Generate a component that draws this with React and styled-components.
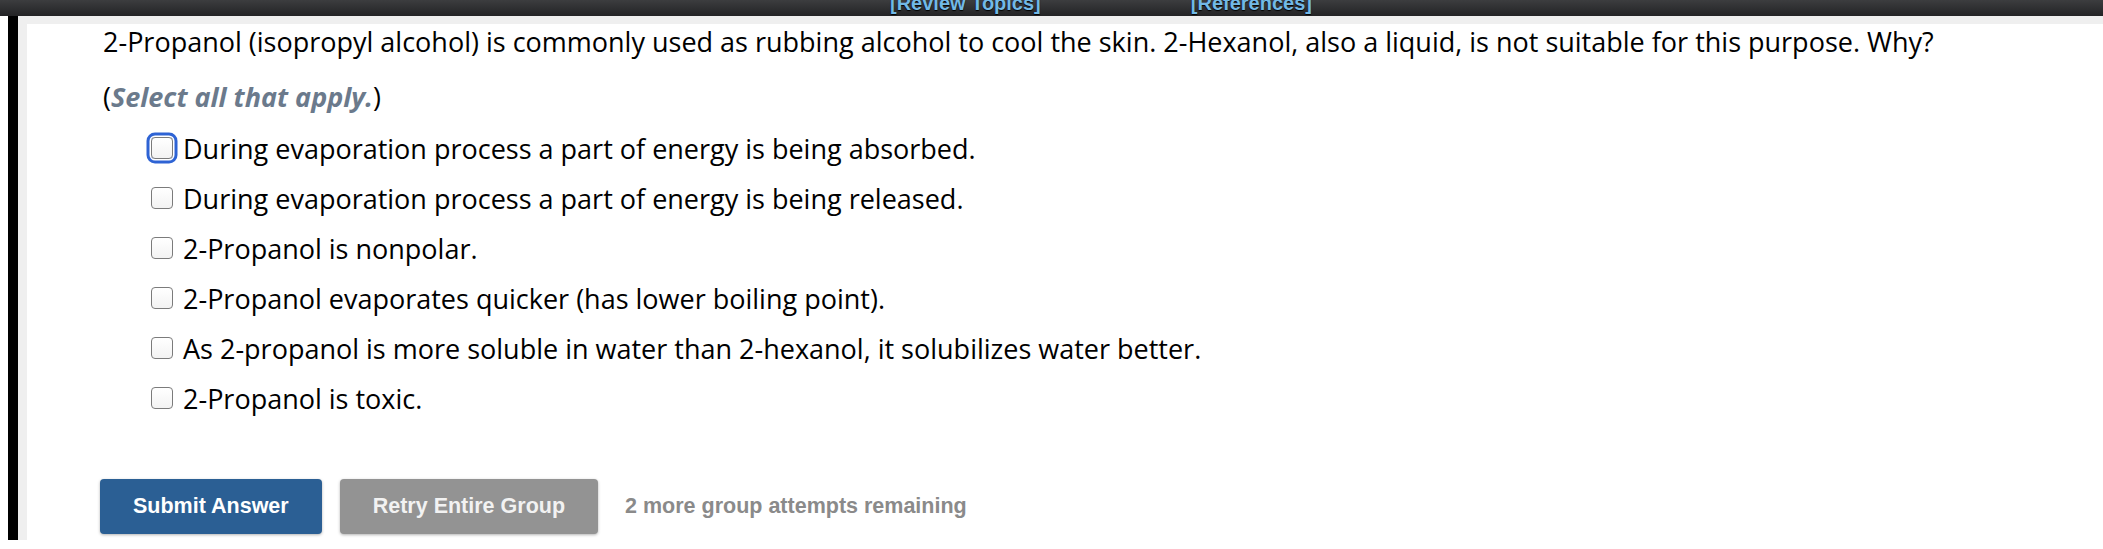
import React from 'react';
import styled, {createGlobalStyle} from 'styled-components';

const GlobalStyle = createGlobalStyle`
    html, body {
        margin: 0;
        padding: 0;
        background: #fff;
    }
    body {
        font-family: "Open Sans", "Liberation Sans", sans-serif;
        color: #000;
    }
`;

const TopBar = styled.div`
    height: 16px;
    overflow: hidden;
    display: flex;
    align-items: flex-start;
    gap: 150px;
    padding-left: 890px;
    background: linear-gradient(#3c3d3f, #232325);
`;

const TopLink = styled.a`
    margin-top: -7px;
    font-family: "Liberation Sans", Arial, sans-serif;
    font-weight: bold;
    font-size: 20px;
    line-height: 20px;
    color: #72b9e6;
    text-decoration: none;
    text-shadow: 0 1px 1px #000;
    white-space: nowrap;
`;

const Page = styled.div`
    display: flex;
    padding-left: 8px;
`;

const Frame = styled.div`
    flex: 1;
    border-left: 10px solid #000;
`;

const Panel = styled.div`
    min-height: 524px;
    box-sizing: border-box;
    border-top: 8px solid #efefef;
    border-left: 9px solid #efefef;
    background: #fff;
    padding: 0 0 0 73px;
`;

const Text = styled.p`
    margin: ${p => p.$top || 0}px 0 0 3px;
    font-size: 27px;
    line-height: 36px;
`;

const Hint = styled.em`
    font-weight: bold;
    color: #6b7a8c;
`;

const Options = styled.div`
    margin: 8px 0 0 51px;
`;

const Row = styled.label`
    display: flex;
    align-items: center;
    height: 50px;
    font-size: 27px;
`;

const Box = styled.span`
    flex: none;
    width: 22px;
    height: 22px;
    box-sizing: border-box;
    margin-right: 10px;
    border: 1.5px solid #7b7b7b;
    border-radius: 4px;
    background: linear-gradient(#fff, #f3f3f3);
    box-shadow: ${p => p.$focus ? '0 0 0 1.5px #fff, 0 0 0 4.5px #2e63d4' : 'none'};
`;

const Actions = styled.div`
    display: flex;
    align-items: center;
    margin-top: 56px;
    font-family: "Liberation Sans", Arial, sans-serif;
    font-weight: bold;
    font-size: 21.5px;
`;

const Button = styled.button`
    height: 55px;
    padding: 0 33px;
    margin-right: 18px;
    border: none;
    border-radius: 4px;
    font: inherit;
    color: ${p => p.$muted ? '#f2f2f2' : '#fff'};
    background: ${p => p.$muted ? '#939393' : '#2b5f94'};
    box-shadow: 0 1px 3px rgba(0, 0, 0, 0.3);
`;

const Remaining = styled.span`
    margin-left: 9px;
    color: #8a8a8a;
`;

const options = [
    'During evaporation process a part of energy is being absorbed.',
    'During evaporation process a part of energy is being released.',
    '2-Propanol is nonpolar.',
    '2-Propanol evaporates quicker (has lower boiling point).',
    'As 2-propanol is more soluble in water than 2-hexanol, it solubilizes water better.',
    '2-Propanol is toxic.'
];

export default function App() {
    return (
        <>
            <GlobalStyle />
            <TopBar>
                <TopLink href="#">[Review Topics]</TopLink>
                <TopLink href="#">[References]</TopLink>
            </TopBar>
            <Page>
                <Frame>
                    <Panel>
                        <Text>
                            2-Propanol (isopropyl alcohol) is commonly used as rubbing alcohol to cool the skin. 2-Hexanol, also a liquid, is not suitable for this purpose. Why?
                        </Text>
                        <Text $top={19}>
                            (<Hint>Select all that apply.</Hint>)
                        </Text>
                        <Options>
                            {options.map((text, i) => (
                                <Row key={i}>
                                    <Box $focus={i === 0} />
                                    {text}
                                </Row>
                            ))}
                        </Options>
                        <Actions>
                            <Button>Submit Answer</Button>
                            <Button $muted>Retry Entire Group</Button>
                            <Remaining>2 more group attempts remaining</Remaining>
                        </Actions>
                    </Panel>
                </Frame>
            </Page>
        </>
    );
}
